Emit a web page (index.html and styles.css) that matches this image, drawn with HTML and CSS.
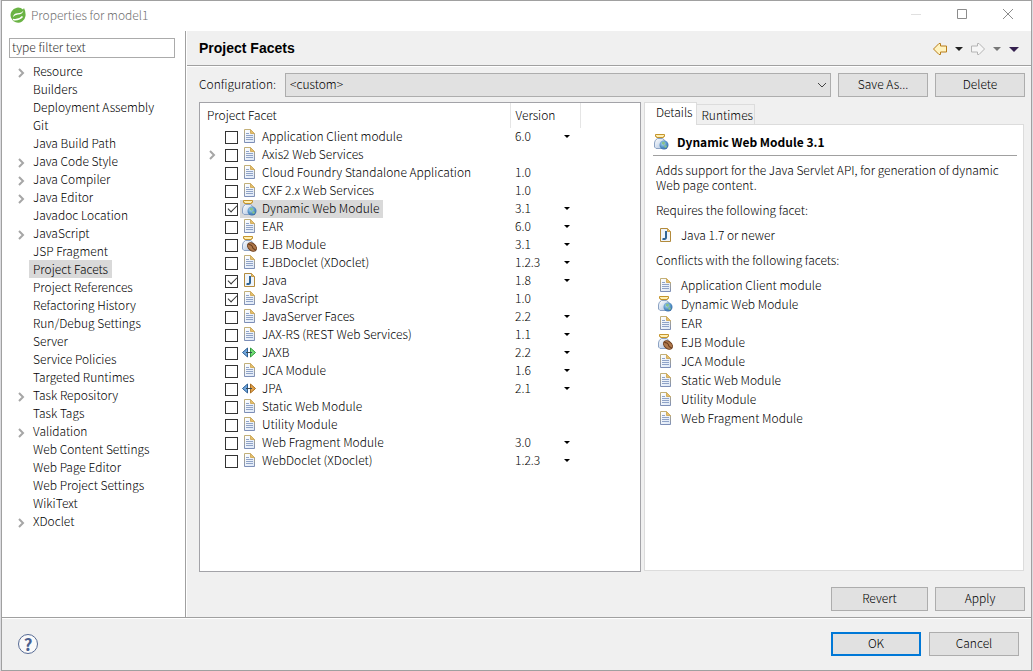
FILE: index.html
```html
<!DOCTYPE html>
<html lang="en">
<head>
  <meta charset="UTF-8" />
  <meta name="viewport" content="width=device-width, initial-scale=1.0"/>
  <title>Properties for model1</title>
  <link rel="stylesheet" href="styles.css">
</head>
<body>
  <svg class="sprite" aria-hidden="true">
    <defs>
      <linearGradient id="paper" x1="0" y1="0" x2="1" y2="1">
        <stop offset="0" stop-color="#ffffff"/><stop offset="1" stop-color="#dbe6f5"/>
      </linearGradient>
      <linearGradient id="edge" x1="0" y1="0" x2="0" y2="1">
        <stop offset="0" stop-color="#c3b078"/><stop offset="1" stop-color="#7d8fb8"/>
      </linearGradient>
      <linearGradient id="glass" x1="0" y1="0" x2="1" y2="1">
        <stop offset="0" stop-color="#ffffff"/><stop offset="1" stop-color="#a9c0de"/>
      </linearGradient>
      <radialGradient id="globe" cx="0.4" cy="0.35" r="0.7">
        <stop offset="0" stop-color="#b8dcf2"/><stop offset="0.6" stop-color="#4f8fc4"/><stop offset="1" stop-color="#3b68a5"/>
      </radialGradient>
    </defs>
    <symbol id="doc" viewBox="0 0 16 16">
      <path d="M3.5 1.5h6l4 4v9h-10z" fill="url(#paper)" stroke="url(#edge)"/>
      <path d="M9.5 1.5v4h4z" fill="#e6c06a" stroke="#d0ad62"/>
      <path d="M5 5.5h3M5 7.5h7M5 9.5h7M5 11.5h7" stroke="#8fa3c8"/>
    </symbol>
    <symbol id="web" viewBox="0 0 16 16">
      <path d="M4.5 4.5Q1.500 6 1.500 9v4l1.500 1.500h8L12.500 13V9q0-3-3-4.500z" fill="url(#glass)" stroke="#8ba2c4"/>
      <path d="M2.500.500h9v2h-1v1h-7v-1h-1z" fill="#fff0b5" stroke="#c5952d"/>
      <circle cx="11" cy="11" r="4.500" fill="url(#globe)"/>
      <path d="M9 8q3-1 3 1l-1 2-2-1zM12 11l2 1-1 2-2-1z" fill="#86c28a"/>
    </symbol>
    <symbol id="ejb" viewBox="0 0 16 16">
      <path d="M4.500 4.500Q1.500 6 1.500 9v4l1.500 1.500h8L12.500 13V9q0-3-3-4.500z" fill="url(#glass)" stroke="#8ba2c4"/>
      <path d="M2.500.500h9v2h-1v1h-7v-1h-1z" fill="#fff0b5" stroke="#c5952d"/>
      <ellipse cx="11" cy="11" rx="5" ry="3.600" transform="rotate(42 11 11)" fill="#b07a4c" stroke="#70401f"/>
      <path d="M7.500 8.500q4 0 4 2.500t3 2.500" fill="none" stroke="#5e3216"/>
    </symbol>
    <symbol id="java" viewBox="0 0 16 16">
      <path d="M3.500 1.500h7l3 3v10h-10z" fill="#eef4fb" stroke="#b28a3c"/>
      <path d="M10.500 1.500v3h3z" fill="#e6c06a" stroke="#c79d4c"/>
      <path d="M9 4v6.500q0 2-3.500 1.500" fill="none" stroke="#2f6496" stroke-width="2"/>
    </symbol>
    <symbol id="jaxb" viewBox="0 0 16 16">
      <path d="M1.500 8.500 6.500 4v9z" fill="#6fa5dc" stroke="#2d5f94"/>
      <path d="M14.500 8.500 9.500 4v9z" fill="#74dc78" stroke="#2d9a3a"/>
      <path d="M5 8.500h6" stroke="#3a4a55"/>
    </symbol>
    <symbol id="jpa" viewBox="0 0 16 16">
      <path d="M1.500 8.500 6.500 4v9z" fill="#6fa5dc" stroke="#2d5f94"/>
      <path d="M14.500 8.500 9.500 4v9z" fill="#e0a24c" stroke="#a86c1f"/>
      <path d="M5 8.500h6" stroke="#3a4a55"/>
    </symbol>
    <symbol id="arrow-left" viewBox="0 0 16 14">
      <path d="M1.500 7 7 1.500h1.500V4h6v6h-6v2.500H7z" stroke-linejoin="round"/>
    </symbol>
    <symbol id="arrow-right" viewBox="0 0 16 14">
      <path d="M14.500 7 9 1.500H7.500V4h-6v6h6v2.500H9z" stroke-linejoin="round"/>
    </symbol>
    <symbol id="caret" viewBox="0 0 8 4"><path d="M0 0h8L4 4z"/></symbol>
    <symbol id="chevron" viewBox="0 0 8 10">
      <path d="m2 1 4 4-4 4" fill="none" stroke="#a6a6a6" stroke-width="2"/>
    </symbol>
  </svg>

  <div class="window">
    <header class="titlebar">
      <svg class="logo" viewBox="0 0 16 16" aria-hidden="true">
        <path d="M14 1q2 4 1.500 8a7.500 7.500 0 1 1-2.500-6.500z" fill="#6ab344"/>
        <path d="M13.500 3.500Q12 6 7.500 6.200 3.500 6.500 3 10q2-2.500 5-2.500 4.500 0 5.500-4z" fill="#fff"/>
        <path d="M3 12.500q6 1 9.500-3" fill="none" stroke="#fff" stroke-width="1.500"/>
      </svg>
      <span class="window-title">Properties for model1</span>
      <div class="window-buttons">
        <button class="min" aria-label="Minimize" disabled><svg viewBox="0 0 12 12"><path d="M1 5.500h10"/></svg></button>
        <button aria-label="Maximize"><svg viewBox="0 0 12 12"><path d="M1.500.500h9v9h-9z"/></svg></button>
        <button aria-label="Close"><svg viewBox="0 0 12 12"><path d="m1 0 10 10M11 0 1 10"/></svg></button>
      </div>
    </header>

    <div class="main">
      <nav class="sidebar">
        <input type="text" class="filter" placeholder="type filter text" aria-label="Filter" />
        <ul class="tree" id="tree"></ul>
      </nav>

      <main class="page">
        <div class="page-header">
          <h1>Project Facets</h1>
          <div class="history">
            <button aria-label="Back"><svg class="arrow back"><use href="#arrow-left"/></svg></button>
            <button aria-label="Back history"><svg class="caret"><use href="#caret"/></svg></button>
            <button aria-label="Forward"><svg class="arrow forward"><use href="#arrow-right"/></svg></button>
            <button aria-label="Forward history"><svg class="caret dim"><use href="#caret"/></svg></button>
            <button aria-label="Menu"><svg class="caret menu"><use href="#caret"/></svg></button>
          </div>
        </div>

        <div class="page-body">
          <div class="config">
            <label for="configuration">Configuration:</label>
            <div class="select-box">
              <select id="configuration"><option>&lt;custom&gt;</option></select>
              <svg viewBox="0 0 10 6" aria-hidden="true"><path d="m1 1 4 4 4-4"/></svg>
            </div>
            <button class="btn">Save As...</button>
            <button class="btn">Delete</button>
          </div>

          <div class="panes">
            <div class="facets">
              <table>
                <thead>
                  <tr><th class="col-name">Project Facet</th><th class="col-version">Version</th><th></th></tr>
                </thead>
                <tbody id="facets"></tbody>
              </table>
            </div>

            <section class="details">
              <div class="tabs">
                <button class="tab active">Details</button>
                <button class="tab">Runtimes</button>
              </div>
              <div class="tab-body">
                <h2><svg class="icon"><use href="#web"/></svg>Dynamic Web Module 3.1</h2>
                <p>Adds support for the Java Servlet API, for generation of dynamic Web page content.</p>
                <p>Requires the following facet:</p>
                <ul class="facet-list">
                  <li><svg class="icon"><use href="#java"/></svg>Java 1.7 or newer</li>
                </ul>
                <p>Conflicts with the following facets:</p>
                <ul class="facet-list">
                  <li><svg class="icon"><use href="#doc"/></svg>Application Client module</li>
                  <li><svg class="icon"><use href="#web"/></svg>Dynamic Web Module</li>
                  <li><svg class="icon"><use href="#doc"/></svg>EAR</li>
                  <li><svg class="icon"><use href="#ejb"/></svg>EJB Module</li>
                  <li><svg class="icon"><use href="#doc"/></svg>JCA Module</li>
                  <li><svg class="icon"><use href="#doc"/></svg>Static Web Module</li>
                  <li><svg class="icon"><use href="#doc"/></svg>Utility Module</li>
                  <li><svg class="icon"><use href="#doc"/></svg>Web Fragment Module</li>
                </ul>
              </div>
            </section>
          </div>

          <div class="page-actions">
            <button class="btn wide">Revert</button>
            <button class="btn">Apply</button>
          </div>
        </div>
      </main>
    </div>

    <footer class="footer">
      <button class="help" aria-label="Help">?</button>
      <button class="btn primary">OK</button>
      <button class="btn">Cancel</button>
    </footer>
  </div>

  <script>
    // a leading + marks a node that can be expanded
    const pages = [
      '+Resource', 'Builders', 'Deployment Assembly', 'Git', 'Java Build Path',
      '+Java Code Style', '+Java Compiler', '+Java Editor', 'Javadoc Location',
      '+JavaScript', 'JSP Fragment', 'Project Facets', 'Project References',
      'Refactoring History', 'Run/Debug Settings', 'Server', 'Service Policies',
      'Targeted Runtimes', '+Task Repository', 'Task Tags', '+Validation',
      'Web Content Settings', 'Web Page Editor', 'Web Project Settings',
      'WikiText', '+XDoclet'
    ];

    const facets = [
      { name: 'Application Client module', version: '6.0', menu: true },
      { name: 'Axis2 Web Services', expandable: true },
      { name: 'Cloud Foundry Standalone Application', version: '1.0' },
      { name: 'CXF 2.x Web Services', version: '1.0' },
      { name: 'Dynamic Web Module', version: '3.1', menu: true, icon: 'web', checked: true, selected: true },
      { name: 'EAR', version: '6.0', menu: true },
      { name: 'EJB Module', version: '3.1', menu: true, icon: 'ejb' },
      { name: 'EJBDoclet (XDoclet)', version: '1.2.3', menu: true },
      { name: 'Java', version: '1.8', menu: true, icon: 'java', checked: true },
      { name: 'JavaScript', version: '1.0', checked: true },
      { name: 'JavaServer Faces', version: '2.2', menu: true },
      { name: 'JAX-RS (REST Web Services)', version: '1.1', menu: true },
      { name: 'JAXB', version: '2.2', menu: true, icon: 'jaxb' },
      { name: 'JCA Module', version: '1.6', menu: true },
      { name: 'JPA', version: '2.1', menu: true, icon: 'jpa' },
      { name: 'Static Web Module' },
      { name: 'Utility Module' },
      { name: 'Web Fragment Module', version: '3.0', menu: true },
      { name: 'WebDoclet (XDoclet)', version: '1.2.3', menu: true }
    ];

    const chevron = '<svg class="chevron"><use href="#chevron"/></svg>';

    document.getElementById('tree').innerHTML = pages.map(page => {
      const name = page.replace('+', '');
      return `<li><span class="twisty">${page[0] === '+' ? chevron : ''}</span><a href="#"${name === 'Project Facets' ? ' class="selected"' : ''}>${name}</a></li>`;
    }).join('');

    document.getElementById('facets').innerHTML = facets.map((f, i) => `
      <tr>
        <td><div class="facet">
          <span class="twisty">${f.expandable ? chevron : ''}</span>
          <input type="checkbox" id="facet${i}"${f.checked ? ' checked' : ''} />
          <label for="facet${i}"${f.selected ? ' class="selected"' : ''}><svg class="icon"><use href="#${f.icon || 'doc'}"/></svg>${f.name}</label>
        </div></td>
        <td><div class="version">${f.version || ''}${f.menu ? `<button aria-label="Change version of ${f.name}"><svg class="caret small"><use href="#caret"/></svg></button>` : ''}</div></td>
        <td></td>
      </tr>`).join('');
  </script>
</body>
</html>
```
FILE: styles.css
```css
* { box-sizing: border-box; margin: 0; padding: 0; }
body { font-family: "Noto Sans CJK KR", "Noto Sans", sans-serif; font-size: 12px; font-weight: 300; line-height: 18px; color: #000; background: #dcdce0; }
button, input, select { font: inherit; color: inherit; }
button { background: none; border: none; }
ul { list-style: none; }
a { color: inherit; text-decoration: none; }
svg { display: block; flex: none; }
.sprite { position: absolute; width: 0; height: 0; }
.icon { width: 16px; height: 16px; }

.window { min-height: 100vh; margin: 0 1px; border: 1px solid #a0a0a0; background: #f0f0f0; display: flex; flex-direction: column; }

/* title bar */
.titlebar { height: 30px; background: #fff; display: flex; align-items: center; padding: 0 8px 2px; }
.logo { width: 16px; height: 16px; margin-right: 5px; }
.window-title { color: #707070; flex: 1; }
.window-buttons { display: flex; gap: 34px; padding-right: 9px; }
.window-buttons svg { width: 12px; height: 12px; fill: none; stroke: #8c8c8c; }
.window-buttons .min svg { stroke: #e0e0e0; }

.main { flex: 1; display: flex; }

/* page tree */
.sidebar { width: 184px; background: #fff; border-right: 1px solid #a0a0a0; padding: 7px 10px 0 7px; }
.filter { width: 100%; height: 20px; display: block; border: 1px solid #ababab; padding: 0 2px 3px; margin-bottom: 4px; }
.filter::placeholder { color: #333; opacity: 1; }
.tree li { display: flex; height: 18px; white-space: nowrap; }
.tree .twisty { width: 20px; padding: 6px 0 0 8px; }
.tree a { padding: 0 4px; }
.chevron { width: 8px; height: 10px; }
.selected { background: #d9d9d9; }

/* page */
.page { flex: 1; min-width: 0; display: flex; flex-direction: column; border-left: 1px solid #fff; }
.page-header { height: 35px; display: flex; align-items: center; justify-content: space-between; padding: 0 12px; border-bottom: 1px solid #a0a0a0; }
.page-header h1 { font: bold 14px/18px "Liberation Sans", Arial, sans-serif; }
.history { display: flex; align-items: center; gap: 8px; padding-top: 2px; }
.history .arrow { margin: 0 -1px; }
.arrow { width: 16px; height: 14px; }
.back { fill: #fff3c0; stroke: #b87d1a; }
.forward { fill: #f6f6f6; stroke: #b4b4b4; }
.caret { width: 8px; height: 4px; fill: #222; }
.caret.dim { fill: #777; }
.caret.menu { width: 10px; height: 5px; fill: #35204f; }
.caret.small { width: 6px; height: 3px; fill: #000; }

.page-body { flex: 1; display: flex; flex-direction: column; padding: 6px 6px 6px 12px; border-top: 1px solid #fff; }
.config { display: flex; align-items: center; gap: 7px; margin-bottom: 5px; }
.config label { width: 79px; white-space: nowrap; padding-bottom: 2px; }
.select-box { flex: 1; position: relative; }
.select-box select { width: 100%; height: 24px; appearance: none; background: #e1e1e1; border: 1px solid #adadad; border-radius: 0; padding: 0 20px 2px 4px; }
.select-box svg { position: absolute; right: 4px; top: 9px; width: 10px; height: 6px; fill: none; stroke: #444; pointer-events: none; }
.btn { width: 90px; height: 24px; padding-bottom: 2px; background: #e1e1e1; border: 1px solid #adadad; }
.btn.wide { width: 97px; }
.btn.primary { border: 2px solid #0078d7; }

.panes { flex: 1; display: flex; gap: 3px; margin-right: 1px; }

/* facet table */
.facets { flex: 441; min-width: 0; background: #fff; border: 1px solid #a3a3a8; }
.facets table { width: 100%; table-layout: fixed; border-collapse: collapse; }
.facets th { height: 25px; font-weight: inherit; text-align: left; padding: 0 7px 2px; }
.facets .col-name { width: 310px; border-right: 1px solid #e5e5e5; }
.facets .col-version { width: 70px; padding: 0 5px 2px; border-right: 1px solid #e5e5e5; }
.facet, .version { display: flex; align-items: center; height: 18px; white-space: nowrap; }
.facet .twisty { width: 25px; padding-left: 8px; }
.facet input { appearance: none; width: 13px; height: 13px; flex: none; border: 1px solid #333; background: #fff; position: relative; }
.facet input:checked::after { content: ""; position: absolute; left: 2px; top: 1px; width: 8px; height: 4px; border: solid #333; border-width: 0 0 1px 1px; transform: rotate(-45deg); }
.facet label { display: flex; align-items: center; gap: 5px; height: 18px; margin-left: 2px; padding: 0 4px 2px 1px; }
.version { justify-content: space-between; padding: 0 10px 2px 5px; }

/* details */
.details { flex: 381; min-width: 0; display: flex; flex-direction: column; padding-bottom: 1px; }
.tabs { display: flex; align-items: flex-end; height: 22px; }
.tab { height: 20px; padding: 0 1px 0 5px; border: 1px solid #dcdcdc; border-width: 1px 1px 0 0; }
.tab.active { height: 23px; margin-bottom: -1px; padding: 0 3px 4px 11px; background: #fff; border-width: 1px 1px 0 1px; position: relative; }
.tab-body { flex: 1; background: #fff; border: 1px solid #dcdcdc; padding: 3px 6px 0 8px; }
.tab-body h2 { font-size: 12px; display: flex; align-items: center; gap: 8px; height: 28px; border-bottom: 1px solid #a0a0a0; }
.tab-body p { line-height: 15px; margin: 6px 3px 8px; }
.tab-body p + p { margin-top: 10px; }
.facet-list { padding-left: 4px; margin: 8px 0; }
.facet-list li { display: flex; align-items: center; gap: 8px; height: 19px; }

.page-actions { display: flex; justify-content: flex-end; gap: 7px; margin-top: 15px; }

/* dialog buttons */
.footer { height: 53px; display: flex; align-items: center; justify-content: flex-end; gap: 8px; padding: 0 12px 0 16px; border-top: 1px solid #a0a0a0; box-shadow: inset 0 1px #fff; }
.help { width: 20px; height: 20px; margin-right: auto; border: 1px solid #566a94; border-radius: 50%; background: #fafafa; color: #4a6090; font-size: 17px; font-weight: bold; line-height: 18px; }
```
